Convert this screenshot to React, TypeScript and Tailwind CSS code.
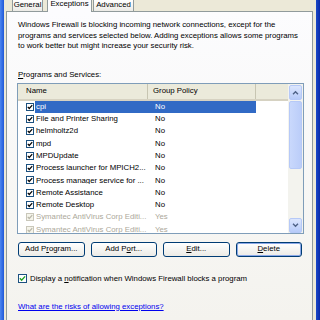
import React from "react";

const rows = [
  { name: "cpi", gp: "No", selected: true },
  { name: "File and Printer Sharing", gp: "No" },
  { name: "helmholtz2d", gp: "No" },
  { name: "mpd", gp: "No" },
  { name: "MPDUpdate", gp: "No" },
  { name: "Process launcher for MPICH2...", gp: "No" },
  { name: "Process manager service for ...", gp: "No" },
  { name: "Remote Assistance", gp: "No" },
  { name: "Remote Desktop", gp: "No" },
  { name: "Symantec AntiVirus Corp Editi...", gp: "Yes", disabled: true },
  { name: "Symantec AntiVirus Corp Editi...", gp: "Yes", disabled: true },
];

function Check({ color = "#000000", disabled = false, size = 8 }: { color?: string; disabled?: boolean; size?: number }) {
  return (
    <div
      className={`shrink-0 flex items-center justify-center border ${
        disabled ? "border-[#C9C7BA] bg-[#F5F4EA]" : "border-[#1C5180] bg-white"
      }`}
      style={{ width: size, height: size }}
    >
      <svg viewBox="0 0 8 8" width={size - 2} height={size - 2}>
        <path d="M1 3.8 L3 6 L7 1.6" fill="none" stroke={disabled ? "#B8B6A8" : color} strokeWidth="1.6" />
      </svg>
    </div>
  );
}

function Tab({ label, active, className }: { label: string; active?: boolean; className: string }) {
  return (
    <div
      className={`${className} flex items-center justify-center border-l border-r border-[#919B9C] ${
        active
          ? "h-[13px] mb-[-1px] relative z-10 bg-[#FCFCFE] pb-[3px]"
          : "h-[11px] bg-gradient-to-b from-white to-[#ECEBE6] pb-[1px]"
      }`}
    >
      {label}
    </div>
  );
}

function ScrollArrow({ up }: { up?: boolean }) {
  return (
    <div className="h-[15px] mx-[1px] rounded-[2px] border border-[#B6C9F7] bg-gradient-to-b from-[#DCE6FD] to-[#B7CBF9] flex items-center justify-center">
      <svg viewBox="0 0 8 6" width="7" height="5">
        <path d={up ? "M1 5 L4 2 L7 5" : "M1 1 L4 4 L7 1"} fill="none" stroke="#4D6185" strokeWidth="1.6" />
      </svg>
    </div>
  );
}

function XpButton({ children, isDefault }: { children: React.ReactNode; isDefault?: boolean }) {
  return (
    <div
      className={`h-[15px] rounded-[3px] border border-[#003C74] bg-gradient-to-b from-white to-[#ECEBE6] flex items-center justify-center ${
        isDefault ? "shadow-[inset_0_0_0_1px_#8AA8E8]" : ""
      }`}
    >
      {children}
    </div>
  );
}

export default function App() {
  return (
    <div className="w-[320px] h-[320px] overflow-hidden flex bg-[#ECE9D8] text-[7.8px] leading-none text-black font-['Liberation_Sans',Arial,sans-serif]">
      {/* left window frame */}
      <div className="w-[4px] bg-gradient-to-r from-[#4C86F0] to-[#2058D8]" />
      <div className="w-[2px]" />

      <div className="w-[307px] flex flex-col">
        {/* tabs */}
        <div className="h-[11px] flex items-end">
          <Tab label="General" className="ml-[6px] w-[31px]" />
          <Tab label="Exceptions" active className="ml-[4px] w-[45px]" />
          <Tab label="Advanced" className="ml-[1px] w-[41px]" />
        </div>

        {/* panel */}
        <div className="flex-1 border border-[#919B9C] border-b-0 bg-gradient-to-b from-[#FCFCFE] to-[#F4F3EE] pl-[11px] pt-[8px]">
          <p className="leading-[10.5px] whitespace-nowrap">
            Windows Firewall is blocking incoming network connections, except for the
            <br />
            programs and services selected below. Adding exceptions allows some programs
            <br />
            to work better but might increase your security risk.
          </p>

          <div className="mt-[18px] leading-[10px]">
            <span className="underline">P</span>rograms and Services:
          </div>

          {/* list view */}
          <div className="mt-[3px] -ml-[1px] w-[287px] h-[151px] border border-[#7F9DB9] bg-white flex overflow-hidden">
            <div className="flex-1 flex flex-col">
              <div className="h-[17px] shrink-0 flex bg-[#EBEADB] border-b-[2px] border-[#D6D2C2]">
                <div className="w-[130px] pl-[8px] flex items-center border-r border-[#C7C5B2]">Name</div>
                <div className="w-[108px] pl-[5px] flex items-center border-r border-[#C7C5B2]">Group Policy</div>
              </div>
              {rows.map((r, i) => (
                <div key={i} className="h-[12.3px] shrink-0 flex items-center">
                  <div className="w-[8px]" />
                  <Check disabled={r.disabled} />
                  <div
                    className={`ml-[1px] h-full flex items-center ${
                      r.selected ? "bg-[#316AC5] text-white w-[221px]" : "w-[221px]"
                    } ${r.disabled ? "text-[#ACA899]" : ""}`}
                  >
                    <div className="w-[119px] pl-[1px] whitespace-nowrap overflow-hidden">{r.name}</div>
                    <div className="pl-[1px]">{r.gp}</div>
                  </div>
                </div>
              ))}
            </div>

            {/* scrollbar */}
            <div className="w-[15px] bg-[#F3F3EE] flex flex-col pt-[1px]">
              <ScrollArrow up />
              <div className="mx-[1px] mt-[1px] h-[68px] rounded-[2px] border border-[#B6C9F7] bg-gradient-to-r from-[#C9D8FC] to-[#BBCDF9]" />
              <div className="flex-1" />
              <ScrollArrow />
            </div>
          </div>

          {/* buttons */}
          <div className="mt-[8px] w-[284px] grid grid-cols-4 gap-[6px]">
            <XpButton>
              Add P<span className="underline">r</span>ogram...
            </XpButton>
            <XpButton>
              Add P<span className="underline">o</span>rt...
            </XpButton>
            <XpButton>
              <span className="underline">E</span>dit...
            </XpButton>
            <XpButton isDefault>
              <span className="underline">D</span>elete
            </XpButton>
          </div>

          {/* notification checkbox */}
          <div className="mt-[17px] h-[10px] flex items-center gap-[3px]">
            <Check color="#21A121" size={9} />
            <span className="whitespace-nowrap">
              Display a <span className="underline">n</span>otification when Windows Firewall blocks a program
            </span>
          </div>

          <div className="mt-[18px] leading-[10px] text-[#0000EE] underline whitespace-nowrap">
            What are the risks of allowing exceptions?
          </div>
        </div>
      </div>

      <div className="w-[3px]" />
      {/* right window frame */}
      <div className="w-[4px] bg-gradient-to-r from-[#1A48C8] to-[#0A2AA8]" />
    </div>
  );
}
